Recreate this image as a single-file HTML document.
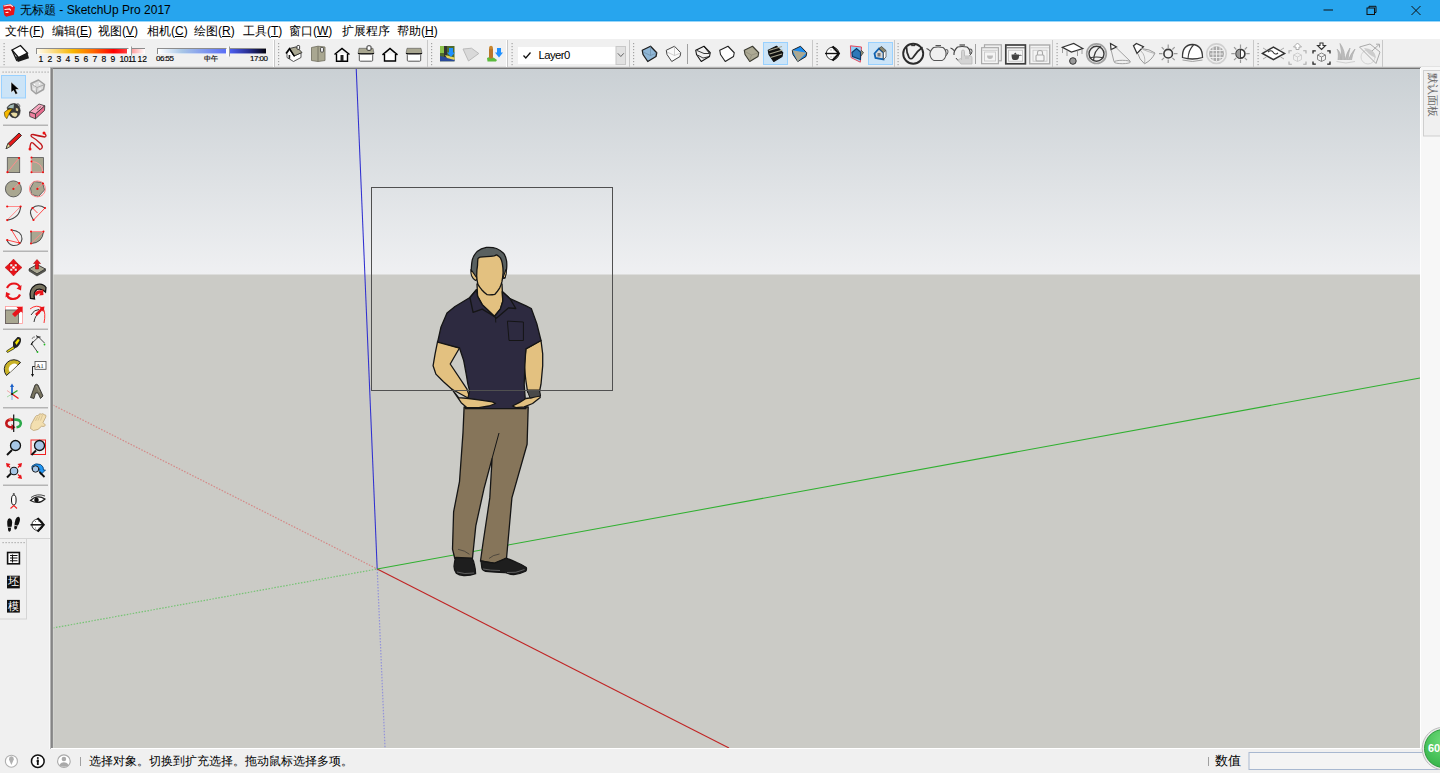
<!DOCTYPE html>
<html><head><meta charset="utf-8">
<style>
*{margin:0;padding:0;box-sizing:border-box}
html,body{width:1440px;height:773px;overflow:hidden;background:#f0f0f0;font-family:"Liberation Sans",sans-serif;position:relative}
.a{position:absolute}
#title{left:0;top:0;width:1440px;height:21px;background:#27a5ee;border-bottom:0}
#ttext{left:20px;top:2px;font-size:12px;color:#000;white-space:nowrap}
#menu{left:0;top:21px;width:1440px;height:18px;background:#fff;font-size:12px;color:#000}
#menu span{position:absolute;top:2px;white-space:nowrap}
#tb{left:0;top:39px;width:1440px;height:28px;background:#f0f0f0}
#left{left:0;top:67px;width:51px;height:681px;background:#f0f0f0}
#vp{left:51px;top:68px;width:1370px;height:681px;background:#cbcbc6;overflow:hidden}
#right{left:1421px;top:67px;width:19px;height:681px;background:#f7f7f7}
#status{left:0;top:749px;width:1440px;height:24px;background:#f0f0f0}
.sep{position:absolute;width:1px;background:#c8c8c8;border-right:1px solid #fff}
.dots{position:absolute;width:2px;background:repeating-linear-gradient(#9a9a9a 0 1px,transparent 1px 3px)}
.hdots{position:absolute;height:2px;background:repeating-linear-gradient(90deg,#9a9a9a 0 1px,transparent 1px 3px)}
.ic{position:absolute;width:20px;height:20px;overflow:visible}
</style></head><body>
<div id="title" class="a"><div id="ttext" class="a">无标题 - SketchUp Pro 2017</div></div>
<svg class="a" style="left:0;top:0" width="1440" height="22" viewBox="0 0 1440 22">
<path d="M3 5.2 L10.3 3.9 L15 7.1 L13.9 14.7 L6.2 16.7 L4.2 15 Z" fill="#e8141a"/>
<path d="M4 6 L10.3 4.8 L12.5 6.5 M5 9.5 L9.5 9 L10.5 10 M6 12.5 L8 12.3" fill="none" stroke="#fff" stroke-width="1.2" stroke-linecap="round" opacity="0.9"/>
<rect x="1323.5" y="9.5" width="9.5" height="1" fill="#111"/>
<rect x="1367" y="8" width="7.5" height="6.5" fill="none" stroke="#111" stroke-width="1"/>
<path d="M1369 8 V6.3 H1376 V12.5 H1374.5" fill="none" stroke="#111" stroke-width="1"/>
<path d="M1411.5 6 L1420.5 15 M1420.5 6 L1411.5 15" stroke="#111" stroke-width="1"/>
</svg><div class="a" style="left:0;top:20px;width:1440px;height:1px;background:#1a9eec"></div><div class="a" style="left:0;top:21px;width:1440px;height:1px;background:#9ad6f8;z-index:1"></div><div id="menu" class="a">
<span style="left:5px">文件(<u>F</u>)</span>
<span style="left:52px">编辑(<u>E</u>)</span>
<span style="left:98px">视图(<u>V</u>)</span>
<span style="left:147px">相机(<u>C</u>)</span>
<span style="left:194px">绘图(<u>R</u>)</span>
<span style="left:243px">工具(<u>T</u>)</span>
<span style="left:289px">窗口(<u>W</u>)</span>
<span style="left:342px">扩展程序</span>
<span style="left:397px">帮助(<u>H</u>)</span>
</div>
<div id="tb" class="a"></div>
<div id="left" class="a"></div>
<div id="vp" class="a">
<svg width="1370" height="681" viewBox="51 68 1370 681" style="position:absolute;left:0;top:0">
<defs><linearGradient id="sky" x1="0" y1="0" x2="0" y2="1"><stop offset="0" stop-color="#cad0d4"/><stop offset="1" stop-color="#eff0f2"/></linearGradient></defs>
<rect x="51" y="68" width="1370" height="206.5" fill="url(#sky)"/>
<g stroke-width="1.2" fill="none">
<line x1="53" y1="405" x2="377.2" y2="569" stroke="#d87070" stroke-dasharray="1.5 1.5" opacity="0.75"/>
<line x1="53" y1="628" x2="377.2" y2="569" stroke="#50c050" stroke-dasharray="1.5 1.5" opacity="0.7"/>
<line x1="377.2" y1="569" x2="385" y2="748" stroke="#8080e0" stroke-dasharray="1.5 1.5" opacity="0.75"/>
<line x1="356.2" y1="68" x2="377.2" y2="569" stroke="#3030d0" stroke-width="1.05"/>
<line x1="377.2" y1="569" x2="729" y2="748" stroke="#c02424" stroke-width="1.1"/>
<line x1="377.2" y1="569" x2="1420" y2="378" stroke="#30b030" stroke-width="1.05"/>
</g>
<g id="person" stroke="#151515" stroke-width="1.3" stroke-linejoin="round">
<!-- pants -->
<path d="M464.1 407 L463 432.6 L459.5 481.6 L453.6 511.9 L452.5 549.2 L454.8 558.5 L472.3 559.7 L475.8 525.9 L484 488.6 L492.1 458.3 L489.8 497.9 L482.8 544.5 L480.5 561 L494.4 563.5 L506.5 558.5 L511.9 497.9 L527.1 444.3 L528.2 407 Z" fill="#86755a"/>
<path d="M499 433 L492.1 458.3" fill="none" stroke-width="1"/>
<!-- shoes -->
<path d="M455.6 557.5 L471.9 558.1 Q474 561 474.4 565 Q475.5 569 475.6 573.75 Q470 575.8 463.75 575.6 Q459 575 456.25 573.1 Q454 570 454 566.25 Q454.5 561 455.6 557.5 Z" fill="#1e1e1e"/>
<path d="M481 561 Q488 562.5 494.4 563.1 Q500 561 506.25 558.1 Q511 560 516.9 562.5 Q522 564.5 526.25 567.5 Q527 570 525.6 571.25 Q520 574 513.75 574.7 Q509 574 504.4 572.5 Q495 572 485.6 571.25 Q482.5 570.5 481.9 568.1 Z" fill="#1e1e1e"/>
<path d="M483 569 Q490 570.5 500 570.5 M507 572.5 Q516 573.5 524.5 569.5 M457 572 Q464 574.5 474 573" fill="none" stroke="#8a8a8a" stroke-width="0.6"/>
<path d="M458 549.3 Q465 550.5 469.5 554.3 M489 558.5 Q492.5 555 499.5 554" fill="none" stroke="#2a2a2a" stroke-width="0.6"/>
<!-- left arm -->
<path d="M437.6 341.3 L435.1 353.9 L433.1 365.7 L435.9 374.1 L443.5 381.7 L451.9 389.2 L470.4 399.3 L467.0 389.2 L450.2 364.0 L459.5 348.0 Z" fill="#e3c180"/>
<!-- right arm -->
<path d="M525.9 348.9 L541.0 340.5 L542.7 353.9 L542.7 365.7 L541.0 384.2 L539.4 392 L527.6 392 L525.9 380.8 L524.2 365.7 Z" fill="#e3c180"/>
<!-- shirt -->
<path d="M476.3 289.7 L469.9 297.5 L455 306.5 L447 313 L441.0 327.0 L437.6 342.1 L459.5 348.0 L463.7 360.6 L466.2 374.1 L467.9 384.2 L469.6 390.9 L465.4 408.6 L525.9 408.6 L524.2 384.2 L525.1 360.6 L525.9 348.9 L541.0 340.5 L536.8 323.6 L531.3 308.5 L526.1 305.9 L510 298.7 L502.2 291.6 Z" fill="#2d2a40"/>
<!-- hands over shirt -->
<path d="M451.9 389.2 L458.6 397.6 L468.7 398.5 L480.5 400.2 L492.3 401.8 L495.6 403.5 L488.9 406.0 L478.8 407.7 L467.0 407.7 L461.2 402.7 Z" fill="#e3c180"/>
<path d="M539.4 392 L532.6 397.6 L525.9 398.5 L519.2 402.7 L512.5 406.0 L515.8 407.7 L524.2 406.9 L532.6 403.5 L540.2 397.6 Z" fill="#e3c180"/>
<path d="M527 390 L539.5 390 L540.5 396 L530 398 Z" fill="#4a4a4a" stroke-width="1"/>
<!-- neck V & collar -->
<path d="M477 284 L477.6 296.2 L482.2 304.6 L494.4 316.2 L500.3 309.1 L502.8 301.3 L502 284 Z" fill="#e3c180"/>
<path d="M476.5 290 L469.9 297.5 L473.1 312.3 L482.2 309.1 L494.4 316.5 L482.2 304.6 L477.6 296.2 Z" fill="#2d2a40"/>
<path d="M502.2 291.6 L510 298.7 L515.8 308.5 L508.7 307.8 L496.4 318.2 L494.4 316.5 L500.3 309.1 L502.8 301.3 Z" fill="#2d2a40"/>
<path d="M495.5 317.5 L495.8 322.5" fill="none" stroke-width="1"/>
<path d="M507.4 321.1 L523.4 322 L523.4 340.5 L509 340.5 Z" fill="none" stroke-width="1"/>
<!-- head -->
<path d="M471.2 271 Q471.5 263 472.4 259.4 Q474 254.5 477.1 251.6 Q481 248.2 486.4 247.4 Q492.5 247 496.5 248.5 Q501 250.5 503.5 253.2 Q506 256.5 506.6 261 Q507 265 506.6 269 L505 278 L477 280 Z" fill="#596060"/>
<path d="M471 269.5 Q470.6 273 471.6 275.7 Q473 279 475.5 280.4 L477.5 279 Z" fill="#e3c180" stroke-width="1.1"/>
<path d="M505.9 269.5 Q507 273 505.2 277.5 L503 278 Z" fill="#e3c180" stroke-width="1"/>
<path d="M477.9 258.6 Q479 257.3 480.2 257.1 Q483 256.8 486.4 256.7 Q491 256.5 494.2 255.9 Q495.6 255.5 496.5 254.8 Q499 256 500.4 257.9 Q501.8 260.5 502.3 263.3 Q503.2 268 503.1 272.6 Q502.8 277.5 501.9 281.9 Q501 285.5 499.6 288.1 Q497.5 291.5 494.9 294.3 Q491 295 487.2 294.7 Q484.2 292.5 481.7 289.7 Q479.5 287 477.9 284.3 Q476.8 280 476.7 275.7 Q476.6 270 477.5 265.6 Q477.6 261.5 477.9 258.6 Z" fill="#e3c180"/>
</g>
<rect x="371.5" y="187.5" width="241" height="203" fill="none" stroke="#505050" stroke-width="1"/>
<!-- borders -->
<rect x="51" y="68" width="1370" height="1" fill="#767676"/>
<rect x="51" y="68" width="1" height="681" fill="#858585"/>
<rect x="52" y="68" width="1" height="681" fill="#8f8f8f"/>
<rect x="53" y="69" width="1" height="679" fill="#d9dad6" opacity="0.6"/>
<rect x="1420" y="68" width="1" height="681" fill="#fff"/>
<rect x="51" y="748" width="1370" height="1" fill="#fff"/>
</svg>
</div>
<svg class="a" style="left:0;top:0" width="1440" height="773" viewBox="0 0 1440 773" id="tbsvg">
<defs>
<linearGradient id="shg" x1="0" x2="1"><stop offset="0" stop-color="#fffbee"/><stop offset="0.4" stop-color="#f7b500"/><stop offset="0.62" stop-color="#ff6a00"/><stop offset="0.85" stop-color="#ff0000"/><stop offset="1" stop-color="#ff3a3a"/></linearGradient>
<linearGradient id="shg2" x1="0" x2="1"><stop offset="0" stop-color="#ff9a9a"/><stop offset="1" stop-color="#ffffff"/></linearGradient>
<linearGradient id="tmg" x1="0" x2="1"><stop offset="0" stop-color="#ffffff"/><stop offset="0.35" stop-color="#a9c6e6"/><stop offset="1" stop-color="#5a6ef5"/></linearGradient>
<linearGradient id="tmg2" x1="0" x2="1"><stop offset="0" stop-color="#4c5ef0"/><stop offset="0.5" stop-color="#2a3094"/><stop offset="1" stop-color="#050510"/></linearGradient>
</defs>
<rect x="0" y="66" width="1440" height="1" fill="#e2e2e2"/><rect x="0" y="67" width="51" height="1" fill="#dadada"/><rect x="51" y="67" width="1370" height="1" fill="#b4b4b4"/>
<g id="tbseps" fill="#c8c8c8">
<rect x="273" y="40" width="1" height="27" fill="#fff"/><rect x="274" y="40" width="1" height="27"/>
<rect x="427" y="40" width="1" height="27"/><rect x="506" y="40" width="1" height="27" fill="#fff"/><rect x="507" y="40" width="1" height="27"/>
<rect x="629" y="40" width="1" height="27"/><rect x="812" y="40" width="1" height="27"/><rect x="894" y="40" width="1" height="27"/>
<rect x="1052" y="40" width="1" height="27"/><rect x="1253" y="40" width="1" height="27"/><rect x="1382" y="40" width="1" height="27"/>
<rect x="687" y="44" width="1" height="20" fill="#a0a0a0"/><rect x="975" y="44" width="1" height="20" fill="#a0a0a0"/>
</g>
<g fill="#a3a3a3">
<rect x="3.5" y="43" width="1.2" height="1.2"/><rect x="3.5" y="46" width="1.2" height="1.2"/><rect x="3.5" y="49" width="1.2" height="1.2"/><rect x="3.5" y="52" width="1.2" height="1.2"/><rect x="3.5" y="55" width="1.2" height="1.2"/><rect x="3.5" y="58" width="1.2" height="1.2"/><rect x="3.5" y="61" width="1.2" height="1.2"/><rect x="3.5" y="64" width="1.2" height="1.2"/>
</g>
<g id="dotsrep" fill="#a3a3a3"><rect x="278" y="43" width="1.2" height="1.2"/><rect x="278" y="46" width="1.2" height="1.2"/><rect x="278" y="49" width="1.2" height="1.2"/><rect x="278" y="52" width="1.2" height="1.2"/><rect x="278" y="55" width="1.2" height="1.2"/><rect x="278" y="58" width="1.2" height="1.2"/><rect x="278" y="61" width="1.2" height="1.2"/><rect x="278" y="64" width="1.2" height="1.2"/><rect x="431" y="43" width="1.2" height="1.2"/><rect x="431" y="46" width="1.2" height="1.2"/><rect x="431" y="49" width="1.2" height="1.2"/><rect x="431" y="52" width="1.2" height="1.2"/><rect x="431" y="55" width="1.2" height="1.2"/><rect x="431" y="58" width="1.2" height="1.2"/><rect x="431" y="61" width="1.2" height="1.2"/><rect x="431" y="64" width="1.2" height="1.2"/><rect x="511.5" y="43" width="1.2" height="1.2"/><rect x="511.5" y="46" width="1.2" height="1.2"/><rect x="511.5" y="49" width="1.2" height="1.2"/><rect x="511.5" y="52" width="1.2" height="1.2"/><rect x="511.5" y="55" width="1.2" height="1.2"/><rect x="511.5" y="58" width="1.2" height="1.2"/><rect x="511.5" y="61" width="1.2" height="1.2"/><rect x="511.5" y="64" width="1.2" height="1.2"/><rect x="633" y="43" width="1.2" height="1.2"/><rect x="633" y="46" width="1.2" height="1.2"/><rect x="633" y="49" width="1.2" height="1.2"/><rect x="633" y="52" width="1.2" height="1.2"/><rect x="633" y="55" width="1.2" height="1.2"/><rect x="633" y="58" width="1.2" height="1.2"/><rect x="633" y="61" width="1.2" height="1.2"/><rect x="633" y="64" width="1.2" height="1.2"/><rect x="816.5" y="43" width="1.2" height="1.2"/><rect x="816.5" y="46" width="1.2" height="1.2"/><rect x="816.5" y="49" width="1.2" height="1.2"/><rect x="816.5" y="52" width="1.2" height="1.2"/><rect x="816.5" y="55" width="1.2" height="1.2"/><rect x="816.5" y="58" width="1.2" height="1.2"/><rect x="816.5" y="61" width="1.2" height="1.2"/><rect x="816.5" y="64" width="1.2" height="1.2"/><rect x="897.5" y="43" width="1.2" height="1.2"/><rect x="897.5" y="46" width="1.2" height="1.2"/><rect x="897.5" y="49" width="1.2" height="1.2"/><rect x="897.5" y="52" width="1.2" height="1.2"/><rect x="897.5" y="55" width="1.2" height="1.2"/><rect x="897.5" y="58" width="1.2" height="1.2"/><rect x="897.5" y="61" width="1.2" height="1.2"/><rect x="897.5" y="64" width="1.2" height="1.2"/><rect x="1056.5" y="43" width="1.2" height="1.2"/><rect x="1056.5" y="46" width="1.2" height="1.2"/><rect x="1056.5" y="49" width="1.2" height="1.2"/><rect x="1056.5" y="52" width="1.2" height="1.2"/><rect x="1056.5" y="55" width="1.2" height="1.2"/><rect x="1056.5" y="58" width="1.2" height="1.2"/><rect x="1056.5" y="61" width="1.2" height="1.2"/><rect x="1056.5" y="64" width="1.2" height="1.2"/><rect x="1257.5" y="43" width="1.2" height="1.2"/><rect x="1257.5" y="46" width="1.2" height="1.2"/><rect x="1257.5" y="49" width="1.2" height="1.2"/><rect x="1257.5" y="52" width="1.2" height="1.2"/><rect x="1257.5" y="55" width="1.2" height="1.2"/><rect x="1257.5" y="58" width="1.2" height="1.2"/><rect x="1257.5" y="61" width="1.2" height="1.2"/><rect x="1257.5" y="64" width="1.2" height="1.2"/></g>

<!-- highlight buttons -->
<rect x="763.5" y="42.5" width="24" height="22" fill="#cce4f7" stroke="#99d1ff"/>
<rect x="868.5" y="42.5" width="24" height="22" fill="#cce4f7" stroke="#99d1ff"/>
<!-- house iso -->
<path d="M287 53.5 L289.5 49.5 L294 56 L301 52.8 V57.5 L293.5 61.5 L287 57.5 Z" fill="#fff" stroke="#444" stroke-width="0.9"/>
<path d="M289.5 48.5 L296.5 46.8 L302 52.5 L294 56 Z" fill="#a9a791" stroke="#222" stroke-width="0.8"/>
<path d="M286 53.5 L289.5 48.5 L294.5 56.3" fill="none" stroke="#000" stroke-width="1.5"/>
<rect x="288.6" y="55" width="1.6" height="3.8" fill="#222"/>
<rect x="297" y="45.5" width="2.6" height="3.8" rx="0.8" fill="#fff" stroke="#222" stroke-width="0.9"/>
<!-- box front -->
<path d="M311.5 47.5 L318 46.2 L325 47 L325 60.5 L318 61.5 L311.5 60.5 Z" fill="#a9a791" stroke="#6d6b5c" stroke-width="0.8"/>
<path d="M318 46.3 V61.3" stroke="#6d6b5c" stroke-width="0.8"/>
<rect x="320.5" y="47.5" width="3" height="4.5" rx="0.8" fill="#e8e8e8" stroke="#333" stroke-width="0.8"/>
<!-- house front -->
<path d="M334.5 54.5 L342 48.5 L349.5 54.5" fill="none" stroke="#000" stroke-width="1.6"/>
<path d="M336.5 53.5 V61.2 H347.5 V53.5" fill="#fff" stroke="#000" stroke-width="1.4"/>
<rect x="340.5" y="55" width="3" height="6.2" fill="#222"/>
<!-- house top -->
<path d="M359 48.3 H373 L374 53.5 H358 Z" fill="#a9a791" stroke="#555" stroke-width="0.6"/>
<rect x="358" y="53" width="16" height="1.2" fill="#111"/>
<rect x="359.3" y="54.2" width="13.4" height="7" rx="1" fill="#fff" stroke="#555" stroke-width="1"/>
<rect x="367" y="45.8" width="4" height="4.5" rx="1" fill="#fff" stroke="#222" stroke-width="0.9"/>
<!-- house outline -->
<path d="M382.5 54.8 L390 48.5 L397.5 54.8" fill="none" stroke="#000" stroke-width="1.6"/>
<path d="M384.5 53.5 V61 H395.5 V53.5" fill="#fff" stroke="#000" stroke-width="1.4"/>
<!-- house gray roof -->
<path d="M407 48.3 H421 L422 53.5 H406 Z" fill="#a9a791" stroke="#555" stroke-width="0.6"/>
<rect x="406" y="53" width="16" height="1.2" fill="#111"/>
<rect x="407.3" y="54.2" width="13.4" height="7" rx="1" fill="#fff" stroke="#555" stroke-width="1"/>
<!-- map -->
<rect x="440" y="46" width="14.5" height="15.3" fill="#4f6b2c"/>
<path d="M440 46 h5 v7 h-5z" fill="#8cc24a"/><path d="M444 46 h3 v15 h-3z" fill="#333"/>
<path d="M440 56 L454.5 59 V61.3 H440 Z" fill="#2a4a9a"/><path d="M445 55 L454.5 57.5 V60 L447 58 Z" fill="#e6d45a"/>
<path d="M449 48 H453 V52.5 H455 L451 57 L447 52.5 H449 Z" fill="#1e90ff"/>
<!-- gray shape -->
<path d="M463 49 L471.5 48.2 L478.8 53.5 L468.5 61 Z" fill="#d9d9d9" stroke="#b5b5b5" stroke-width="0.9"/>
<!-- figure arrow -->
<path d="M487 58 Q492 55 497 60 L496 61.5 H487.5 Z" fill="#5bbb3d"/>
<rect x="489" y="47.5" width="4" height="11" rx="1.5" fill="#b9762a"/>
<circle cx="491" cy="47.5" r="1.8" fill="#c9872e"/>
<path d="M497 48 H501 V52.5 H503 L499 57.5 L495 52.5 H497 Z" fill="#1e90ff"/>
<rect x="517.5" y="46.5" width="108" height="18" fill="#fff" stroke="#f0f0f0"/>
<rect x="616" y="46.5" width="9.5" height="18" fill="#e1e1e1" stroke="#c8c8c8"/>
<path d="M617.8 53.3 L620.8 56.5 L623.8 53.3" fill="none" stroke="#555" stroke-width="0.9"/>
<path d="M523.5 55.5 L525.8 58 L530.5 52.5" fill="none" stroke="#111" stroke-width="1.3"/>
<polygon points="642.25,50.25 650.50,46.25 656.75,52.75 656.00,56.50 647.75,61.50 643.00,54.50" fill="#8fb6d6" stroke="#1d1d1d" stroke-width="1.3" stroke-linejoin="round"/><path d="M650.5 46.5 L650.5 55.5 L643 52 M650.5 55.5 L656.5 53" stroke="#6d8ea8" stroke-width="0.7" fill="none"/><polygon points="666.25,50.25 674.50,46.25 680.75,52.75 680.00,56.50 671.75,61.50 667.00,54.50" fill="#fafafa" stroke="#444" stroke-width="1.0" stroke-linejoin="round"/><path d="M674.5 46.5 L674.5 55.5 L667 52 M674.5 55.5 L680.5 53" stroke="#bbb" stroke-width="0.7" fill="none"/><polygon points="695.75,50.25 704.00,46.25 710.25,52.75 709.50,56.50 701.25,61.50 696.50,54.50" fill="none" stroke="#111" stroke-width="1.1" stroke-linejoin="round"/><path d="M704 46.5 L709.5 53.5 M697 50.5 L704 53.5 L709.5 53.5 M697.5 55 L703 58 L709.5 56.5" stroke="#222" stroke-width="0.9" fill="none"/><polygon points="719.75,50.25 728.00,46.25 734.25,52.75 733.50,56.50 725.25,61.50 720.50,54.50" fill="#fff" stroke="#222" stroke-width="1.1" stroke-linejoin="round"/><polygon points="744.25,50.25 752.50,46.25 758.75,52.75 758.00,56.50 749.75,61.50 745.00,54.50" fill="#aca994" stroke="#3a3a30" stroke-width="1.1" stroke-linejoin="round"/><path d="M745 51.5 L751.5 55 L758 53 M751.5 55 L749.5 61" stroke="#8a8775" stroke-width="0.6" fill="none"/><polygon points="768.25,50.25 776.50,46.25 782.75,52.75 782.00,56.50 773.75,61.50 769.00,54.50" fill="#111" stroke="#111" stroke-width="1.1" stroke-linejoin="round"/><path d="M768.8 50.5 L782 46.5 M769.5 54 L782.5 50 M770.5 57.5 L782 54" stroke="#a9a68f" stroke-width="1.3" fill="none"/><polygon points="792.25,50.25 800.50,46.25 806.75,52.75 806.00,56.50 797.75,61.50 793.00,54.50" fill="#1a8cf0" stroke="#222" stroke-width="1.0" stroke-linejoin="round"/><path d="M792.5 50.3 L806.5 52.8 L797.8 61.5 Z" fill="#aba891"/><circle cx="832.6" cy="53.5" r="6.3" fill="#fff" stroke="#222" stroke-width="0.9"/>
<path d="M825 53.5 H839.5" stroke="#111" stroke-width="1.4"/>
<path d="M831.5 47 L833.5 45.8 L840.2 53.5 L833.5 61.2 L831.5 60 L837.5 53.5 Z" fill="#111"/>
<path d="M830.5 50 H831.5 M833.5 50 H834.5 M830.5 57 H831.5 M833.5 57 H834.5" stroke="#555" stroke-width="0.8"/>
<path d="M850.4 45.8 L861.5 47 L860.3 62.2 L851 57.5 Z" fill="#8fd0f8" stroke="#e8475a" stroke-width="1"/>
<path d="M852 52.5 L856.5 48.5 L860.5 52 V59.5 L852.5 56.5 Z" fill="#2f78b8" stroke="#0d3a66" stroke-width="1.1"/>
<path d="M861 50 L863.5 52.5 L861 56" fill="#8a8a70" stroke="#333" stroke-width="0.7"/>
<path d="M874.5 53.5 L879 48.5 L883.5 52.5 V59.5 L875.5 58 Z" fill="#d9d9d9" stroke="#1062b0" stroke-width="1.8"/>
<path d="M879 48.5 L881.5 46.5 L886 50.5 L883.5 52.5 Z" fill="#8a876f" stroke="#333" stroke-width="0.7"/>
<path d="M883.5 52.5 L886 50.5 V57 L883.5 59.5 Z" fill="#fff" stroke="#444" stroke-width="0.7"/>
<rect x="877.5" y="53" width="3" height="3.5" fill="#777"/>

<circle cx="913.2" cy="53.7" r="10" fill="none" stroke="#2b2b2b" stroke-width="1.9"/>
<path d="M906.5 47 Q906.5 53 909 57.5 Q911 60 913 57.5 Q917 51 922.5 47.2" fill="none" stroke="#2b2b2b" stroke-width="1.7"/>
<path d="M911.2 45.6 H915.2" stroke="#2b2b2b" stroke-width="1.1"/>
<path d="M935.5 45.6 H941" stroke="#555" stroke-width="1.2"/>
<path d="M933.5 47.5 Q938 46.5 943 47.5 Q946.5 50 946 55 Q945 59.5 942 60.5 H934 Q931 59.5 930 55 Q929.5 51 933.5 47.5Z" fill="none" stroke="#555" stroke-width="1.1"/>
<path d="M930.5 51.5 Q928.5 49 926.5 48.5" fill="none" stroke="#555" stroke-width="1.1"/>
<path d="M945.5 49.5 Q948.5 49 948 52 Q947.5 55 945.5 56" fill="none" stroke="#555" stroke-width="1"/>
<path d="M959.5 45 H965" stroke="#444" stroke-width="1.2"/>
<path d="M957.5 47 Q962 46 967 47 Q970.5 49.5 970 54 M954 55 Q953.5 51 957.5 47" fill="none" stroke="#444" stroke-width="1.1"/>
<path d="M954.5 51 Q952.5 48.5 950.5 48" fill="none" stroke="#444" stroke-width="1.1"/>
<path d="M969.5 49 Q972.5 48.5 972 51.5 Q971.5 54.5 969.5 55.5" fill="none" stroke="#444" stroke-width="1"/>
<path d="M956 58 Q957 60 959 61" fill="none" stroke="#444" stroke-width="1"/>
<path d="M961 64 L958 60 L960.5 58.5 L961.5 59.5 V51.5 Q961.5 50 963 50 Q964.5 50 964.5 51.5 V56 H970.5 Q972 56 972 57.5 V64 Z" fill="#d4d4d4" stroke="#b8b8b8" stroke-width="0.8"/>
<path d="M966 57 V59 M968 57 V59" stroke="#aaa" stroke-width="0.6"/>
<rect x="984.5" y="44.8" width="16.8" height="16" fill="none" stroke="#aaa" stroke-width="1.2"/>
<rect x="981.6" y="47.7" width="16.8" height="16" fill="#f4f4f4" stroke="#aaa" stroke-width="1.2"/>
<path d="M982.5 50.3 H997.5" stroke="#c4c4c4" stroke-width="0.8"/>
<rect x="984.5" y="52" width="11" height="9" fill="none" stroke="#c8c8c8" stroke-width="0.9"/>
<path d="M987 55.5 H993 Q993 59 990 59 Q987 59 987 55.5Z" fill="#bbb"/>
<rect x="1005.8" y="45" width="19.6" height="18.8" fill="#f7f7f7" stroke="#3e3e3e" stroke-width="1.7"/>
<path d="M1006.5 47.8 H1024.8" stroke="#3e3e3e" stroke-width="0.8"/>
<rect x="1008.5" y="50.2" width="14" height="11" fill="none" stroke="#c0c0c0" stroke-width="0.9"/>
<path d="M1011.5 54.5 H1019 Q1019.5 60 1016 60 H1014 Q1011.5 60 1011.5 54.5Z" fill="#444"/><path d="M1019 55.5 Q1021 54.5 1021.5 56" stroke="#444" stroke-width="0.9" fill="none"/><path d="M1013.5 54.5 L1015.3 52.5 L1017 54.5" fill="#444"/>
<rect x="1029.7" y="45" width="20" height="18.8" fill="#f4f4f4" stroke="#aaa" stroke-width="1.4"/>
<path d="M1030.5 47.8 H1049" stroke="#c4c4c4" stroke-width="0.8"/>
<rect x="1033" y="50.2" width="14" height="11" fill="none" stroke="#c8c8c8" stroke-width="0.9"/>
<rect x="1036" y="55" width="8" height="6" rx="1" fill="none" stroke="#aaa" stroke-width="1.1"/>
<path d="M1037.5 55 V52.5 Q1037.5 50.5 1040 50.5 Q1042.5 50.5 1042.5 52.5 V55" fill="none" stroke="#aaa" stroke-width="1.1"/>
<path d="M1062.4 47.3 L1073.7 43.5 L1082.8 48.5 L1071.4 52 Z" fill="#fff" stroke="#333" stroke-width="1.2"/>
<path d="M1062.5 48 V53 M1067 50.5 V56 M1077.5 50.5 V56 M1082 49 V54" stroke="#888" stroke-width="0.8"/>
<circle cx="1072.9" cy="61" r="3.3" fill="#999" stroke="#333" stroke-width="1"/>
<circle cx="1096.5" cy="53.7" r="9.8" fill="none" stroke="#a0a0a0" stroke-width="1.7"/>
<circle cx="1096.5" cy="53.8" r="7.5" fill="none" stroke="#3a3a3a" stroke-width="1.4"/>
<path d="M1101 46.5 Q1094 50 1093.5 61" fill="none" stroke="#3a3a3a" stroke-width="1.2"/>
<path d="M1089.5 58 Q1096.5 56 1103.5 58" fill="none" stroke="#3a3a3a" stroke-width="1.1"/>
<path d="M1110.5 43.5 L1116.5 47 L1111 49.5 Z" fill="#fff" stroke="#333" stroke-width="1.2"/>
<path d="M1111 49.5 L1114 61.7 M1116 47.5 L1130.5 61.5" stroke="#999" stroke-width="0.9"/>
<ellipse cx="1122.3" cy="62" rx="8.2" ry="1.7" fill="none" stroke="#999" stroke-width="0.9"/>
<path d="M1133.5 45.8 L1136.4 43.5 L1143.4 46.7 L1137 53.4 Z" fill="#fff" stroke="#333" stroke-width="1.3"/>
<path d="M1141 48.5 Q1150 49 1155 53 Q1152 60 1144.5 63.8 Q1139 59 1138 54" fill="none" stroke="#999" stroke-width="1"/>
<path d="M1141 51 Q1146 56 1144.5 63.5 M1143 49.5 Q1149 52 1154.5 53.5" fill="none" stroke="#aaa" stroke-width="0.8"/>
<circle cx="1168.2" cy="53.7" r="4.3" fill="none" stroke="#3a3a3a" stroke-width="1.6"/>
<path d="M1168.2 44.5 V48 M1168.2 59.5 V63 M1159 53.7 H1162.5 M1174 53.7 H1177.5 M1161.7 47.2 L1164 49.5 M1172.4 57.9 L1174.7 60.2 M1174.7 47.2 L1172.4 49.5 M1164 57.9 L1161.7 60.2" stroke="#999" stroke-width="1.2"/>
<path d="M1182.5 57.5 Q1182 45 1192.4 44.5 Q1202.5 45 1202.5 57.5 Q1192.4 60.5 1182.5 57.5Z" fill="#fff" stroke="#3a3a3a" stroke-width="1.3"/>
<path d="M1193.5 45 Q1188.5 50 1188 58.5" fill="none" stroke="#3a3a3a" stroke-width="1.1"/>
<path d="M1182.5 60 Q1192.4 63 1202.5 60" fill="none" stroke="#999" stroke-width="0.9"/>
<circle cx="1216.5" cy="53.7" r="9.8" fill="none" stroke="#d0d0d0" stroke-width="1.6"/>
<circle cx="1216.5" cy="53.7" r="7.5" fill="#aaa"/>
<path d="M1210 50.5 H1223 M1210 54 H1223 M1210 57.5 H1223 M1213 47 V61 M1216.5 46.5 V61 M1220 47 V61" stroke="#f0f0f0" stroke-width="0.9"/>
<circle cx="1240.5" cy="53.7" r="4.4" fill="#fff" stroke="#3a3a3a" stroke-width="1.7"/>
<path d="M1240.5 49.5 A4.2 4.2 0 0 0 1240.5 58 Z" fill="#999"/>
<path d="M1240.5 49 V58.5" stroke="#3a3a3a" stroke-width="1"/>
<path d="M1240.5 44.5 V48 M1240.5 59.5 V63 M1231.3 53.7 H1234.8 M1246.2 53.7 H1249.7 M1234 47.2 L1236.3 49.5 M1244.7 57.9 L1247 60.2 M1247 47.2 L1244.7 49.5 M1236.3 57.9 L1234 60.2" stroke="#999" stroke-width="1.2"/>
<path d="M1262.5 53.4 L1273.4 47 L1284.6 53.4 L1273.4 59.7 Z" fill="#fff" stroke="#333" stroke-width="1.5"/>
<path d="M1268 52 Q1271 49.5 1273 52 Q1275 55.5 1278 53" fill="none" stroke="#333" stroke-width="1.1"/>
<path d="M1263 48 L1266.5 50 M1284 48 L1280.5 50 M1263 59 L1266.5 57 M1284 59 L1280.5 57" stroke="#aaa" stroke-width="1"/>
<path d="M1297.5 43 L1301.5 47 H1299 V49.5 H1296 V47 H1293.5 Z" fill="#fff" stroke="#aaa" stroke-width="1"/>
<path d="M1289 53.5 V50.8 H1291.8 M1303.2 50.8 H1306 V53.5 M1289 61.5 V64.2 H1291.8 M1303.2 64.2 H1306 V61.5" fill="none" stroke="#aaa" stroke-width="1.1"/>
<path d="M1297.5 53 L1301.5 55 V59.5 L1297.5 61.5 L1293.5 59.5 V55 Z M1293.5 55 L1297.5 57 L1301.5 55 M1297.5 57 V61.5" fill="none" stroke="#ccc" stroke-width="0.9"/>
<path d="M1321.5 49.5 L1325.5 45.5 H1323 V43 H1320 V45.5 H1317.5 Z" fill="#fff" stroke="#333" stroke-width="1.1"/>
<path d="M1313 53.5 V50.8 H1315.8 M1327.2 50.8 H1330 V53.5 M1313 61.5 V64.2 H1315.8 M1327.2 64.2 H1330 V61.5" fill="none" stroke="#222" stroke-width="1.3"/>
<path d="M1321.5 53 L1325.5 55 V59.5 L1321.5 61.5 L1317.5 59.5 V55 Z M1317.5 55 L1321.5 57 L1325.5 55 M1321.5 57 V61.5" fill="none" stroke="#888" stroke-width="1"/>
<path d="M1338 60 Q1339 52 1337 49 Q1341.5 53 1341 60 M1341.5 60 Q1342 50 1340 43.5 Q1345.5 51 1344.5 60 M1345 60 Q1347 52 1350 48 Q1348.5 53 1348 60 M1348.5 60 Q1351 53 1355 49 Q1352 55 1351.5 60" fill="#bbb" stroke="#aaa" stroke-width="0.7"/>
<path d="M1336.5 61.5 Q1346 64.5 1355 61.5" fill="none" stroke="#ccc" stroke-width="0.9"/>
<circle cx="1368" cy="57" r="7" fill="none" stroke="#d4d4d4" stroke-width="1"/>
<path d="M1359.5 47 L1370 44 L1380 52 L1376 63.5 Z" fill="none" stroke="#aaa" stroke-width="1"/>
<path d="M1364 48 Q1374 48 1376 58 Q1368 55 1364 48Z" fill="#ccc"/>
<path d="M1372 51 L1379 44.5 M1376 44.2 H1379.5 V47.5" stroke="#aaa" stroke-width="1" fill="none"/>
<!-- shadow icon -->
<path d="M12 50 L20.5 45.5 L27.5 53 L18.5 57.5 Z" fill="#fff" stroke="#111" stroke-width="1.3"/>
<path d="M15.5 56 L18.5 57.5 L27.5 53 L29 58.2 L17.8 62 Z" fill="#1a1a1a"/>
<path d="M12 50 L17 61" stroke="#111" stroke-width="1.3"/>
<!-- shadow slider -->
<rect x="36" y="48" width="109" height="6" fill="#fff"/>
<rect x="36" y="48" width="109" height="1" fill="#8c8c8c"/><rect x="36" y="48" width="1" height="6" fill="#8c8c8c"/>
<rect x="37" y="49" width="90" height="4.5" fill="url(#shg)"/>
<rect x="131.5" y="49" width="13.5" height="4.5" fill="url(#shg2)"/>
<rect x="128.5" y="46.5" width="3" height="9" fill="#fafafa"/><rect x="131" y="46.5" width="1" height="9" fill="#9a9a9a"/>
<!-- time slider -->
<rect x="157" y="48" width="109" height="6" fill="#fff"/>
<rect x="157" y="48" width="109" height="1" fill="#8c8c8c"/><rect x="157" y="48" width="1" height="6" fill="#8c8c8c"/>
<rect x="158" y="49" width="68" height="4.5" fill="url(#tmg)"/>
<rect x="230" y="49" width="36" height="4.5" fill="url(#tmg2)"/>
<rect x="226.5" y="46.5" width="3" height="10" fill="#fafafa"/><rect x="229" y="46.5" width="1" height="10" fill="#9a9a9a"/>
</svg>
<div class="a" id="tblabels" style="left:0;top:0;font-size:8.5px;line-height:8px;color:#000;font-weight:normal;-webkit-text-stroke:0.15px #000">
<span class="a" style="left:38.5px;top:55px">1</span><span class="a" style="left:47.5px;top:55px">2</span><span class="a" style="left:56.5px;top:55px">3</span><span class="a" style="left:65.5px;top:55px">4</span><span class="a" style="left:74.5px;top:55px">5</span><span class="a" style="left:83.5px;top:55px">6</span><span class="a" style="left:92.5px;top:55px">7</span><span class="a" style="left:101.5px;top:55px">8</span><span class="a" style="left:110.5px;top:55px">9</span><span class="a" style="left:119.5px;top:55px;letter-spacing:-0.5px">10</span><span class="a" style="left:128px;top:55px;letter-spacing:-0.5px">11</span><span class="a" style="left:137.5px;top:55px">12</span>
<span class="a" style="left:156px;top:55px;letter-spacing:-0.5px;font-size:8px">06:55</span><span class="a" style="left:204px;top:55px;font-size:7px;white-space:nowrap">中午</span><span class="a" style="left:250px;top:55px;letter-spacing:-0.5px;font-size:8px">17:00</span>
</div>
<div class="a" style="left:538.5px;top:48.5px;font-size:11.3px;letter-spacing:-0.55px;color:#000">Layer0</div>
<svg class="a" style="left:0;top:0" width="60" height="773" viewBox="0 0 60 773" id="lsvg">

<rect x="49" y="68" width="1" height="681" fill="#f8f8f8"/>
<rect x="50" y="67" width="1" height="682" fill="#b4b4b4"/>
<rect x="0" y="538" width="50" height="1" fill="#d4d4d4"/>
<rect x="26" y="539" width="1" height="80" fill="#d4d4d4"/>
<rect x="0" y="618.5" width="27" height="1" fill="#d4d4d4"/>
<g fill="#a3a3a3" id="ldots"><rect x="2.5" y="71.5" width="1.2" height="1.2"/><rect x="5.5" y="71.5" width="1.2" height="1.2"/><rect x="8.5" y="71.5" width="1.2" height="1.2"/><rect x="11.5" y="71.5" width="1.2" height="1.2"/><rect x="14.5" y="71.5" width="1.2" height="1.2"/><rect x="17.5" y="71.5" width="1.2" height="1.2"/><rect x="20.5" y="71.5" width="1.2" height="1.2"/><rect x="23.5" y="71.5" width="1.2" height="1.2"/><rect x="26.5" y="71.5" width="1.2" height="1.2"/><rect x="29.5" y="71.5" width="1.2" height="1.2"/><rect x="32.5" y="71.5" width="1.2" height="1.2"/><rect x="35.5" y="71.5" width="1.2" height="1.2"/><rect x="38.5" y="71.5" width="1.2" height="1.2"/><rect x="41.5" y="71.5" width="1.2" height="1.2"/><rect x="44.5" y="71.5" width="1.2" height="1.2"/><rect x="47.5" y="71.5" width="1.2" height="1.2"/><rect x="2.5" y="542" width="1.2" height="1.2"/><rect x="5.5" y="542" width="1.2" height="1.2"/><rect x="8.5" y="542" width="1.2" height="1.2"/><rect x="11.5" y="542" width="1.2" height="1.2"/><rect x="14.5" y="542" width="1.2" height="1.2"/><rect x="17.5" y="542" width="1.2" height="1.2"/><rect x="20.5" y="542" width="1.2" height="1.2"/><rect x="23.5" y="542" width="1.2" height="1.2"/></g>
<g fill="#b5b5b5">
<rect x="3" y="124.5" width="45" height="1.5"/><rect x="3" y="250.5" width="45" height="1.5"/><rect x="3" y="328.5" width="45" height="1.5"/><rect x="3" y="407" width="45" height="1.5"/><rect x="3" y="484.5" width="45" height="1.5"/>
</g>
<rect x="1.5" y="75.5" width="24" height="22.5" fill="#cce4f7" stroke="#99d1ff"/>
<!-- select arrow -->
<path d="M11 81.8 L19.4 89.5 L15.8 89.6 L17.8 93.5 L15.5 94.5 L13.5 90.6 L11 92.5 Z" fill="#000" stroke="#fff" stroke-width="0.6"/>
<!-- component -->
<path d="M31 83.5 L38.5 80 L44.5 84.5 L43.5 89.5 L36 93.8 L31.5 90 Z" fill="#dcdcdc" stroke="#a0a0a0" stroke-width="1.5" stroke-linejoin="round"/>
<path d="M31.5 84 L37 87.5 L44 84.8 M37 87.5 L36.3 93.3" stroke="#a8a8a8" stroke-width="1" fill="none"/>
<path d="M34 84 h1.2 v1.2 h-1.2z M39 83 h1.2 v1.2 h-1.2z M33.5 88.5 h1.2 v1.2 h-1.2z M39.5 88.5 h1.2 v1.2 h-1.2z" fill="#fff"/>
<!-- paint bucket -->
<path d="M7 107.5 Q10 103.2 14.5 103.5 Q19.5 104.5 20.2 110.5 Q20 116.5 15.5 118 Q11 118 9.3 114.5 Z" fill="#3a3a3a" stroke="#222" stroke-width="0.6"/>
<path d="M7.5 107.5 Q10 104.5 14 104.3 L13.5 108.5 Z" fill="#a3bcb8"/>
<path d="M10.8 113.3 Q13.5 111.8 17.2 113.2 Q17.8 116 15 117 Q12.3 116.5 10.8 113.3Z" fill="#e8dba2"/>
<path d="M15.8 107.8 L18.2 108.8 L18 111.3 L15.8 110.5 Z" fill="#d9c98e"/>
<path d="M16.8 104 Q19.8 103.3 19.8 106.8" stroke="#333" stroke-width="0.8" fill="none"/>
<path d="M4.3 112.3 Q8 108.5 12.3 108.8 Q9.2 112.5 6.8 118.7 Q4.2 117 4.3 112.3 Z" fill="#f7b900" stroke="#3a3000" stroke-width="0.6"/>
<!-- eraser -->
<path d="M29.5 112 L39 104 L44.8 105.8 L35.5 114 Z" fill="#f7a8c0" stroke="#333" stroke-width="0.8"/>
<path d="M29.5 112 L35.5 114 L35.5 118.8 L29.8 116.5 Z" fill="#f0809f" stroke="#333" stroke-width="0.8"/>
<path d="M35.5 114 L44.8 105.8 L44.5 110.5 L35.5 118.8 Z" fill="#e86d8f" stroke="#333" stroke-width="0.8"/>
<path d="M37 110 L41 106.5" stroke="#555" stroke-width="0.8"/>
<!-- pencil -->
<path d="M6.1 148.7 L8 143.5 L19 133 L21.5 135.5 L10.5 146.2 Z" fill="#e51a1a" stroke="#222" stroke-width="0.9"/>
<path d="M6.1 148.7 L8 143.5 L10.5 146.2 Z" fill="#e8e0a0" stroke="#222" stroke-width="0.6"/>
<!-- freehand -->
<path d="M30 149 Q30 141 33 143 Q36 146 40 149.5 Q44 148 41 144 Q36 139 32 137 Q29.5 134.5 33 134.5 Q39 136 45 137 Q47.5 136 44 133" fill="none" stroke="#c0161a" stroke-width="1.3"/>
<circle cx="30" cy="149" r="1.5" fill="#f01010"/><circle cx="44" cy="132.9" r="1.5" fill="#f01010"/>
<!-- rectangle -->
<rect x="7.3" y="157.6" width="12.4" height="15" fill="#a9a791" stroke="#555" stroke-width="0.8"/>
<path d="M7.5 172.2 L19 158" stroke="#ff8b8b" stroke-width="1"/>
<circle cx="7.5" cy="172.2" r="1.1" fill="#f01010"/><circle cx="19" cy="158" r="1.1" fill="#f01010"/>
<!-- rotated rect -->
<rect x="31.3" y="157.6" width="12.2" height="15" fill="#a9a791" stroke="#555" stroke-width="0.8"/>
<path d="M31.5 157.6 V172.2 H43 M31.5 161.5 Q42 162 43 172.2" fill="none" stroke="#ff9a9a" stroke-width="1"/>
<circle cx="31.5" cy="157.6" r="1" fill="#f01010"/><circle cx="31.5" cy="161.5" r="1" fill="#f01010"/><circle cx="31.5" cy="172.2" r="1" fill="#f01010"/><circle cx="43" cy="172.2" r="1" fill="#f01010"/>
<!-- circle -->
<circle cx="13.4" cy="188.9" r="8" fill="#a9a791" stroke="#555" stroke-width="0.9"/>
<path d="M13.4 188.9 L19.2 183.2" stroke="#ff8b8b" stroke-width="1"/>
<circle cx="13.4" cy="188.9" r="1.1" fill="#f01010"/><circle cx="19.2" cy="183.2" r="1.1" fill="#f01010"/>
<!-- polygon -->
<path d="M30.5 188 L34 181.5 L42.5 182.5 L44.5 190 L38.5 196.5 L31.5 194.5 Z" fill="#a9a791" stroke="#555" stroke-width="0.9"/>
<circle cx="37.4" cy="188.9" r="8" fill="none" stroke="#ff8b8b" stroke-width="1"/>
<path d="M37.4 188.9 L43 183.5" stroke="#ff8b8b" stroke-width="1"/>
<circle cx="37.4" cy="188.9" r="1.1" fill="#f01010"/><circle cx="43" cy="183.5" r="1.1" fill="#f01010"/>
<!-- arc -->
<path d="M7.2 206.5 H20.6 L7.2 220.1" fill="none" stroke="#ff8b8b" stroke-width="1"/>
<path d="M20.6 206.5 Q20 218 7.2 220.1" fill="none" stroke="#444" stroke-width="1.1"/>
<circle cx="7.2" cy="206.5" r="1.1" fill="#f01010"/><circle cx="20.6" cy="206.5" r="1.1" fill="#f01010"/><circle cx="7.2" cy="220.1" r="1.1" fill="#f01010"/>
<!-- arc3 -->
<path d="M33.5 220 Q28 212 32.5 208 Q38 203.5 45 208" fill="none" stroke="#444" stroke-width="1.1"/>
<path d="M32.5 208 L37.5 213 M45 208 L33.5 220" fill="none" stroke="#ff4a4a" stroke-width="1"/>
<circle cx="32.5" cy="208" r="1.1" fill="#f01010"/><circle cx="45" cy="208" r="1.1" fill="#f01010"/><circle cx="33.5" cy="220" r="1.1" fill="#f01010"/>
<!-- pie -->
<path d="M11.5 230 Q22 231 22 239 Q21 246 13 245.5 Q8.5 244.5 7 240" fill="none" stroke="#444" stroke-width="1.1"/>
<path d="M11.5 230 L19.5 243 L7.2 240" fill="none" stroke="#ff4a4a" stroke-width="1"/>
<circle cx="11.5" cy="230" r="1.1" fill="#f01010"/><circle cx="19.5" cy="243" r="1.1" fill="#f01010"/><circle cx="7.2" cy="240" r="1.1" fill="#f01010"/>
<!-- pie filled -->
<path d="M31 231.5 H43.5 Q42.5 243 31 243.5 Z" fill="#a9a791" stroke="#444" stroke-width="0.9"/>
<path d="M31 231.5 H43.5 L31 243.5" fill="none" stroke="#ff8b8b" stroke-width="1"/>
<circle cx="31" cy="231.5" r="1" fill="#f01010"/><circle cx="43.5" cy="231.5" r="1" fill="#f01010"/><circle cx="31" cy="243.5" r="1" fill="#f01010"/>
<!-- move -->
<path d="M13.5 259 L18 264 H9 Z M13.5 276 L18 271 H9 Z M5 267.5 L10 263 V272 Z M22 267.5 L17 263 V272 Z" fill="#e8141a" stroke="#a00" stroke-width="0.4"/>
<path d="M13.5 263 V272 M9 267.5 H18" stroke="#e8141a" stroke-width="2.4"/>

<circle cx="13.5" cy="267.5" r="1.3" fill="#fff"/>
<!-- pushpull -->
<path d="M29 269 L37 264.5 L45.5 269 L37 274 Z" fill="#a9a791" stroke="#333" stroke-width="0.9"/>
<path d="M29 269 V271 L37 276 L45.5 271 V269 L37 274 Z" fill="#5a5a50" stroke="#333" stroke-width="0.6"/>
<path d="M37 259.5 L40.5 263.5 H38.5 V269 H35.5 V263.5 H33.5 Z" fill="#e8141a" stroke="#900" stroke-width="0.5"/>
<!-- rotate -->
<path d="M7 288 Q9 283.5 14 283.5 Q18.5 283.5 20 287.5" fill="none" stroke="#e8141a" stroke-width="2.2"/>
<path d="M21.5 285 L21 290.5 L16.5 288.5 Z" fill="#e8141a"/>
<path d="M20 294.5 Q18 299 13 299 Q8.5 299 7 295" fill="none" stroke="#e8141a" stroke-width="2.2"/>
<path d="M5.5 297.5 L6 292 L10.5 294 Z" fill="#e8141a"/>
<!-- follow me -->
<path d="M30.5 298.5 Q28.5 289 35.5 285 Q42.5 282.5 46 287.5 L45.5 292 Q41.5 288 37 289.5 Q33 292.5 34.5 299 Z" fill="#77735f" stroke="#111" stroke-width="1.3"/>
<path d="M34.5 293.5 Q37 289.5 42 290.5 L43 289 L43.5 295 L39 295.5 L40.5 293.5 Q38 293 36 296 Z" fill="#e8141a"/>
<!-- scale -->
<rect x="5.5" y="306.5" width="17" height="17" fill="#fff" stroke="#ff9a9a" stroke-width="0.8"/>
<rect x="5.5" y="310" width="13" height="13.5" fill="#a9a791" stroke="#555" stroke-width="0.8"/>
<path d="M12 314 L18 308.5 L16.5 307 H22.5 V313 L21 311.5 L15 317 Z" fill="#e8141a"/>
<!-- offset -->
<path d="M30 309 Q36 304 43 308 Q46 313 44 323" fill="none" stroke="#ff3030" stroke-width="1"/>
<path d="M31 315 Q34 309.5 39 309.5 M34 322 Q35 315 40 312.5" fill="none" stroke="#333" stroke-width="1"/>
<path d="M35 314 L40.5 308.5 L39 307.5 L44.5 306.5 L43.5 312 L42 310.5 L37 316 Z" fill="#e8141a"/>
<!-- tape -->
<path d="M13 342 L17.5 337 Q20.5 336.5 21 339 Q21.5 343 17.5 347 Q15 349 13 347.5 Z" fill="#222"/>
<path d="M15 342.5 L18 339 Q19.5 339 19.5 340.5 L16.5 345 Z" fill="#f5e600"/>
<path d="M6.5 351 L13.5 346.5 L14.5 348.5 L7.5 352.5 Z" fill="#f5e600" stroke="#222" stroke-width="0.8"/>
<!-- dimension -->
<path d="M31.5 343.5 L38.5 337 L44.5 343 M31.5 343.5 L37.5 352 M38.5 337 L36 335.5" fill="none" stroke="#333" stroke-width="0.9"/>
<path d="M36.5 337 L40.5 337 M33 341.5 L31 345" stroke="#111" stroke-width="1.1"/>
<circle cx="44.5" cy="344.5" r="0.9" fill="#22bb22"/><circle cx="37.5" cy="352" r="0.9" fill="#22bb22"/>
<path d="M32 339 Q33 336 35 337" fill="none" stroke="#555" stroke-width="0.7"/>
<!-- protractor -->
<path d="M6.5 375.5 A9.6 9.6 0 0 1 20.6 362.5 Z" fill="#c9b227" stroke="#222" stroke-width="1"/>
<path d="M10 372.3 A5.3 5.3 0 0 1 17.6 365 Z" fill="#fff"/>
<!-- text -->
<path d="M32.5 366.5 V375" stroke="#111" stroke-width="0.9"/>
<path d="M31 374 L32.5 377 L34 374 Z" fill="#111"/>
<path d="M32.5 366.5 H35" stroke="#111" stroke-width="0.9"/>
<rect x="35" y="361.5" width="11" height="7.8" fill="#fff" stroke="#444" stroke-width="0.8"/>
<text x="36" y="367.8" font-size="6.2" font-family="Liberation Serif" fill="#111">A1</text>
<!-- axes -->
<path d="M12 388 V400" stroke="#a8c8e8" stroke-width="1.6"/>
<path d="M12 394 V386" stroke="#1a5fc8" stroke-width="1.6"/>
<path d="M10 387 L12 383.5 L14 387 Z" fill="#1a5fc8"/>
<path d="M12 394 L17.5 390.5" stroke="#2aa02a" stroke-width="1.3"/><path d="M12 394 L7 397" stroke="#a6d8a6" stroke-width="1"/>
<path d="M12 394 L18.5 398.5" stroke="#e81818" stroke-width="1.3"/><path d="M12 394 L7 390.5" stroke="#f0a8a8" stroke-width="1"/>
<circle cx="12" cy="394" r="1" fill="#111"/>
<!-- 3d text -->
<path d="M30.5 397.5 L35 385 Q36.5 383.5 38 385 L43 396 L40.5 398.5 L38 393 H35.5 L34 398.5 Z" fill="#77735f" stroke="#222" stroke-width="0.8"/>
<path d="M36.5 386 L39.5 392" stroke="#aaa69a" stroke-width="0.7"/>
<!-- orbit -->
<path d="M13.2 419.8 Q7 419 6.3 423.2 Q6.5 427.5 13 427.3" fill="none" stroke="#c0161a" stroke-width="2.6"/>
<path d="M14.2 419.8 Q20.3 419 20.8 423.2 Q20.6 427 16.5 427.3" fill="none" stroke="#2aa84a" stroke-width="2.6"/>
<path d="M11.5 424 L15.5 427.2 L11.5 430.3 Z" fill="#c0161a"/>
<path d="M8.5 419.5 L11 417.3 L11.5 421.5 Z" fill="#f06a4a"/>
<path d="M13.7 414.5 V432" stroke="#111" stroke-width="1.2"/>
<!-- pan hand -->
<path d="M30.5 428.5 Q30.5 424 33 421 L35.5 416.5 Q36.5 415 38 415.8 L38.8 414.5 Q40 413.2 41.3 414.2 L42.2 413.8 Q43.8 413.5 44.2 415 L45 414.8 Q46.5 415 45.8 417 L43 422.5 L45.5 425.2 Q44.5 427 41.5 426.3 Q38.5 430.5 33.5 430.5 Z" fill="#f3dfb0" stroke="#b39a6a" stroke-width="0.7"/>
<path d="M37.5 417 L35.5 421 M40 415.5 L38 420.5 M42.5 415 L40.5 420.5" stroke="#c9b184" stroke-width="0.6"/>
<!-- zoom -->
<path d="M7 455 L12 450" stroke="#111" stroke-width="2"/>
<circle cx="15.5" cy="445.5" r="5" fill="#a7c7e7" stroke="#111" stroke-width="1.3"/>
<!-- zoom window -->
<rect x="31" y="440" width="14.5" height="14.5" fill="none" stroke="#f02020" stroke-width="1"/>
<path d="M31.5 455 L36 450.5" stroke="#111" stroke-width="2"/>
<circle cx="39.5" cy="445.5" r="5" fill="#a7c7e7" stroke="#111" stroke-width="1.3"/>
<!-- zoom extents -->
<path d="M7 477.5 L11 473.5" stroke="#111" stroke-width="2"/>
<circle cx="14" cy="471" r="3.8" fill="#a7c7e7" stroke="#111" stroke-width="1.1"/>
<path d="M6 463 L10.5 464 L7 467.5 Z M22 463 L21 467.5 L17.5 464 Z M22 479 L17.5 478 L21 474.5 Z" fill="#e8141a"/>
<path d="M7 464.5 L10 467.5 M21 464.5 L18 467.5 M21 477.5 L18 474.5" stroke="#e8141a" stroke-width="1.4"/>
<!-- previous -->
<path d="M32 466 Q35.5 462.5 40.5 464.5 Q44 466.5 43.5 470 L45.5 470 L41 474.5 L38 469.5 L40 470 Q39.5 467 36.5 467 Q33.5 467.5 34 471 Q31 470.5 32 466Z" fill="#2196f3" stroke="#0a3a66" stroke-width="0.8"/>
<circle cx="35.5" cy="469" r="3.2" fill="#a7c7e7" stroke="#111" stroke-width="0.9"/>
<path d="M39.5 472 L44.5 477" stroke="#111" stroke-width="1.8"/>
<!-- walk (position camera) -->
<ellipse cx="13.8" cy="500" rx="2.3" ry="5" fill="#fff" stroke="#111" stroke-width="1"/>
<circle cx="13.8" cy="494" r="1.1" fill="#555"/>
<path d="M10.5 508.5 L13.8 505.5 L17 508.5" fill="none" stroke="#f02020" stroke-width="1.1"/>
<!-- eye -->
<path d="M30.5 500.5 Q37 494 45 499 Q39 505 30.5 500.5Z" fill="#fff" stroke="#222" stroke-width="1.2"/>
<circle cx="36.5" cy="500" r="2.3" fill="#111"/>
<path d="M31 497.5 Q37 493 45 496" fill="none" stroke="#333" stroke-width="0.9"/>
<!-- footprints -->
<path d="M9.5 518.2 Q12 518.5 12.2 522.5 Q12 526 11 528 L10.8 530.5 Q10 532 8.8 531.5 Q7.8 530.5 8 528.5 Q7 525 7.2 521.5 Q7.8 518.3 9.5 518.2Z" fill="#111"/>
<path d="M18.5 516.8 Q20.5 517.5 19.8 521 Q19 524.5 17.5 526 L16.8 528.5 Q15.8 530 14.6 529.2 Q13.8 528 14.5 526 Q14.5 522.5 15.5 519.5 Q16.8 516.5 18.5 516.8Z" fill="#111"/>
<path d="M7.5 527.3 H11.5 M14.3 525.3 L17.8 526" stroke="#fff" stroke-width="0.7"/>
<!-- look around -->
<circle cx="37.5" cy="524.8" r="5.6" fill="#fff" stroke="#222" stroke-width="0.9"/>
<path d="M30.5 524.8 H44.3" stroke="#111" stroke-width="1.5"/>
<path d="M36.5 518.5 L38.5 517.4 L45 524.8 L38.5 532.2 L36.5 531 L42.3 524.8 Z" fill="#111"/>
<path d="M35 521.5 H36 M38.5 521.5 H39.5 M35 528 H36 M38.5 528 H39.5" stroke="#555" stroke-width="0.8"/>
<!-- panel2 icons -->
<rect x="7.6" y="552.5" width="11.8" height="11.3" fill="#fff" stroke="#111" stroke-width="1.6"/>
<path d="M10 555.5 H17.5 M10 558 H17.5 M10 560.7 H17.5 M12.5 554.5 V562.5" stroke="#111" stroke-width="1.1"/>
<rect x="7" y="575.7" width="12.8" height="12.7" fill="#111"/>
<rect x="7" y="599.9" width="12.8" height="12.7" fill="#111"/>
</svg>
<div class="a" style="left:7.5px;top:575px;width:12px;font-size:10.5px;line-height:13px;color:#fff;font-family:'Liberation Serif',serif;text-align:center">坯</div>
<div class="a" style="left:7.5px;top:599.5px;width:12px;font-size:10.5px;line-height:13px;color:#fff;font-family:'Liberation Serif',serif;text-align:center">模</div>
<div id="right" class="a"></div>
<div id="status" class="a"></div><svg class="a" style="left:0;top:0" width="1440" height="773" viewBox="0 0 1440 773" id="stsvg">
<circle cx="11.4" cy="761.2" r="6" fill="#fff" stroke="#b0b0b0" stroke-width="1.1"/>
<path d="M11.4 765 L9 759.5 Q8.8 756.5 11.4 756.3 Q14 756.5 13.8 759.5 Z" fill="#b0b0b0"/>
<circle cx="37.8" cy="761.2" r="6.3" fill="#fff" stroke="#111" stroke-width="1.5"/>
<circle cx="37.8" cy="758" r="1" fill="#111"/><path d="M37.8 759.5 V765" stroke="#111" stroke-width="1.8"/><path d="M36.5 761 H39" stroke="#111" stroke-width="1.2"/>
<circle cx="63.9" cy="761.2" r="6.3" fill="#fff" stroke="#aaa" stroke-width="1.1"/>
<circle cx="63.9" cy="759" r="2.3" fill="#aaa"/><path d="M59.5 765.5 Q60 762.5 63.9 762.3 Q68 762.5 68.5 765.5 Q64 768 59.5 765.5Z" fill="#aaa"/>
<rect x="80" y="757" width="1" height="9" fill="#a0a0a0"/>
<rect x="1208" y="757" width="1" height="9" fill="#a0a0a0"/>
<rect x="1249" y="752.5" width="200" height="17" fill="#f4f4f4" stroke="#a8b8d0" stroke-width="1"/>
<rect x="1423.5" y="70.5" width="20" height="65.5" fill="#f0f0f0" stroke="#cfcfcf" stroke-width="1"/>
<circle cx="1443.5" cy="748.5" r="21.3" fill="#e9e9e9" stroke="#bdbdbd" stroke-width="1"/>
<defs><radialGradient id="gb" cx="0.5" cy="0.3" r="0.7"><stop offset="0" stop-color="#6fdc7a"/><stop offset="1" stop-color="#36b54a"/></radialGradient></defs>
<circle cx="1443.5" cy="748.5" r="19" fill="url(#gb)" stroke="#2e9a40" stroke-width="1"/>
</svg>
<div class="a" style="left:88.5px;top:752.5px;font-size:12.25px;color:#000;white-space:nowrap">选择对象。切换到扩充选择。拖动鼠标选择多项。</div>
<div class="a" style="left:1215px;top:753px;font-size:12.5px;color:#000;white-space:nowrap">数值</div>
<div class="a" style="left:1428px;top:741.5px;font-size:11px;font-weight:bold;color:#fff;white-space:nowrap">60</div>
<div class="a" style="left:1422.5px;top:88px;width:20px;height:14px;font-size:11px;line-height:14px;color:#6a6a6a;white-space:nowrap;transform:rotate(90deg);transform-origin:50% 50%;text-align:center"><span style="position:relative;left:-12px">默认面板</span></div>

</body></html>
